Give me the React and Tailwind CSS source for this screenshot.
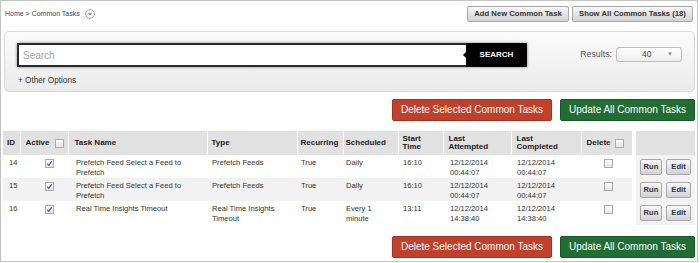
import React from 'react';

const rows = [
  {
    id: 14,
    name: 'Prefetch Feed Select a Feed to Prefetch',
    type: 'Prefetch Feeds',
    recurring: 'True',
    scheduled: 'Daily',
    start: '16:10',
    attempted: ['12/12/2014', '00:44:07'],
    completed: ['12/12/2014', '00:44:07'],
  },
  {
    id: 15,
    name: 'Prefetch Feed Select a Feed to Prefetch',
    type: 'Prefetch Feeds',
    recurring: 'True',
    scheduled: 'Daily',
    start: '16:10',
    attempted: ['12/12/2014', '00:44:07'],
    completed: ['12/12/2014', '00:44:07'],
  },
  {
    id: 16,
    name: 'Real Time Insights Timeout',
    type: 'Real Time Insights Timeout',
    recurring: 'True',
    scheduled: 'Every 1 minute',
    start: '13:11',
    attempted: ['12/12/2014', '14:38:40'],
    completed: ['12/12/2014', '14:38:40'],
  },
];

const Check = ({ checked }) => (
  <span className="inline-flex w-[9px] h-[9px] items-center justify-center border border-[#ababab] bg-linear-to-b from-white to-[#e4e4e4] align-middle">
    {checked && (
      <svg viewBox="0 0 8 8" className="w-[7px] h-[7px]">
        <path d="M1.4 4.1 L3.2 6.1 L6.7 1.3" stroke="#3558a6" strokeWidth="1.3" fill="none" />
      </svg>
    )}
  </span>
);

const GrayBtn = ({ children, className = '' }) => (
  <button
    className={
      'h-[16px] rounded-[2px] border border-[#a8a8a8] bg-linear-to-b from-[#f8f8f8] to-[#d2d2d2] font-bold text-[#333] leading-none ' +
      className
    }
  >
    {children}
  </button>
);

const ActionButtons = () => (
  <div className="flex justify-end gap-[8px]">
    <button className="w-[160px] h-[22px] rounded-[2px] border border-[#a33222] bg-[#c1402b] text-white text-[10px] leading-none">
      Delete Selected Common Tasks
    </button>
    <button className="w-[135px] h-[22px] rounded-[2px] border border-[#175a26] bg-[#226d34] text-white text-[10px] leading-none">
      Update All Common Tasks
    </button>
  </div>
);

const th = 'bg-[#e1e1e1] border-r border-white text-left align-middle font-bold text-[8px] leading-[8.5px] text-[#222]';
const td = 'align-top pt-[3px] text-[7.6px] leading-[9.5px] text-[#333]';

export default function App() {
  return (
    <div
      className="w-[698px] h-[262px] border border-[#c4c4c4] bg-white pl-[2px] pr-[2px] flex flex-col"
      style={{ fontFamily: '"Liberation Sans", Arial, sans-serif' }}
    >
      {/* top bar */}
      <div className="h-[30px] flex items-start justify-between pt-[5px]">
        <div className="flex items-center gap-[5px] pl-[2px] pt-[3px] text-[7px] text-[#3b3f4f]">
          <span>Home &gt; Common Tasks</span>
          <svg viewBox="0 0 10 10" className="w-[10px] h-[10px]">
            <circle cx="5" cy="5" r="4.4" fill="#f4f4f4" stroke="#9a9a9a" strokeWidth="0.8" />
            <path d="M3 4.2 L7 4.2 L5 6.6 Z" fill="#777" />
          </svg>
        </div>
        <div className="flex gap-[3px] pr-[2px]">
          <GrayBtn className="w-[102px] text-[7.7px]">Add New Common Task</GrayBtn>
          <GrayBtn className="w-[121px] text-[7.7px]">Show All Common Tasks (18)</GrayBtn>
        </div>
      </div>

      {/* search panel */}
      <div className="ml-[1px] h-[61px] rounded-[5px] border border-[#d8d8d8] bg-linear-to-b from-[#fbfbfb] to-[#ebebeb] pl-[12px] pr-[12px] pt-[11px]">
        <div className="flex items-start justify-between">
          <div className="flex items-center h-[24px] shadow-[0_0_3px_rgba(0,0,0,0.45)]">
            <div className="w-[449px] h-[24px] bg-white border-2 border-r-0 border-[#2a2a2a] flex items-center pl-[4px] text-[10px] text-[#a3a3a3]">
              Search
            </div>
            <div className="relative w-[61px] h-[24px] bg-black flex items-center justify-center text-white font-bold text-[8px]">
              <span className="absolute left-[-3px] top-[9px] w-0 h-0 border-y-[3px] border-y-transparent border-r-[3px] border-r-black" />
              SEARCH
            </div>
          </div>
          <div className="flex items-center gap-[4px] pt-[4px] pr-[0px]">
            <span className="text-[8.8px] text-[#555]">Results:</span>
            <div className="w-[66px] h-[15px] rounded-[3px] border border-[#bdbdbd] bg-linear-to-b from-white to-[#ededed] flex items-center pl-[25px] pr-[8px] justify-between text-[8.5px] text-[#444]">
              <span>40</span>
              <span className="text-[6px] text-[#888]">▼</span>
            </div>
          </div>
        </div>
        <div className="mt-[9px] text-[8.2px] text-[#333] leading-[9px] pl-[1px]">+ Other Options</div>
      </div>

      <div className="mt-[7px]">
        <ActionButtons />
      </div>

      {/* table */}
      <table className="mt-[10px] table-fixed border-collapse w-[692px]">
        <colgroup>
          <col className="w-[17px]" />
          <col className="w-[48px]" />
          <col className="w-[139px]" />
          <col className="w-[90px]" />
          <col className="w-[46px]" />
          <col className="w-[55px]" />
          <col className="w-[45px]" />
          <col className="w-[68px]" />
          <col className="w-[70px]" />
          <col className="w-[51px]" />
          <col className="w-[4px]" />
          <col className="w-[59px]" />
        </colgroup>
        <thead>
          <tr className="h-[24px]">
            <th className={th + ' pl-[4px]'}>ID</th>
            <th className={th + ' pl-[5px]'}>
              <span className="inline-flex items-center gap-[5px]">
                Active <Check />
              </span>
            </th>
            <th className={th + ' pl-[6px]'}>Task Name</th>
            <th className={th + ' pl-[4px]'}>Type</th>
            <th className={th + ' pl-[3px]'}>Recurring</th>
            <th className={th + ' pl-[2px]'}>Scheduled</th>
            <th className={th + ' pl-[4px]'}>
              Start
              <br />
              Time
            </th>
            <th className={th + ' pl-[5px]'}>
              Last
              <br />
              Attempted
            </th>
            <th className={th + ' pl-[5px]'}>
              Last
              <br />
              Completed
            </th>
            <th className={th + ' pl-[5px]'}>
              <span className="inline-flex items-center gap-[4px]">
                Delete <Check />
              </span>
            </th>
            <th className="bg-white" />
            <th className="bg-[#e1e1e1]" />
          </tr>
        </thead>
        <tbody>
          {rows.map((r, i) => (
            <tr key={r.id} className={i === 2 ? 'h-[24px]' : 'h-[23px]'}>
              <td className={td + ' pl-[6px]' + (i === 1 ? ' bg-[#f2f2f2]' : '')}>{r.id}</td>
              <td className={td + ' pl-[25px]' + (i === 1 ? ' bg-[#f2f2f2]' : '')}>
                <Check checked />
              </td>
              <td className={td + ' pl-[8px] pr-[20px]' + (i === 1 ? ' bg-[#f2f2f2]' : '')}>{r.name}</td>
              <td className={td + ' pl-[5px] pr-[10px]' + (i === 1 ? ' bg-[#f2f2f2]' : '')}>{r.type}</td>
              <td className={td + ' pl-[4px]' + (i === 1 ? ' bg-[#f2f2f2]' : '')}>{r.recurring}</td>
              <td className={td + ' pl-[3px] pr-[6px]' + (i === 1 ? ' bg-[#f2f2f2]' : '')}>{r.scheduled}</td>
              <td className={td + ' pl-[5px]' + (i === 1 ? ' bg-[#f2f2f2]' : '')}>{r.start}</td>
              <td className={td + ' pl-[7px]' + (i === 1 ? ' bg-[#f2f2f2]' : '')}>
                {r.attempted[0]}
                <br />
                {r.attempted[1]}
              </td>
              <td className={td + ' pl-[6px]' + (i === 1 ? ' bg-[#f2f2f2]' : '')}>
                {r.completed[0]}
                <br />
                {r.completed[1]}
              </td>
              <td className={td + ' pl-[23px]' + (i === 1 ? ' bg-[#f2f2f2]' : '')}>
                <Check />
              </td>
              <td className="bg-white" />
              <td className="bg-[#f3f3f3] align-middle">
                <div className="flex justify-center gap-[4px]">
                  <GrayBtn className="w-[22px] text-[7.6px]">Run</GrayBtn>
                  <GrayBtn className="w-[25px] text-[7.6px]">Edit</GrayBtn>
                </div>
              </td>
            </tr>
          ))}
        </tbody>
      </table>

      <div className="mt-[11px]">
        <ActionButtons />
      </div>
    </div>
  );
}
